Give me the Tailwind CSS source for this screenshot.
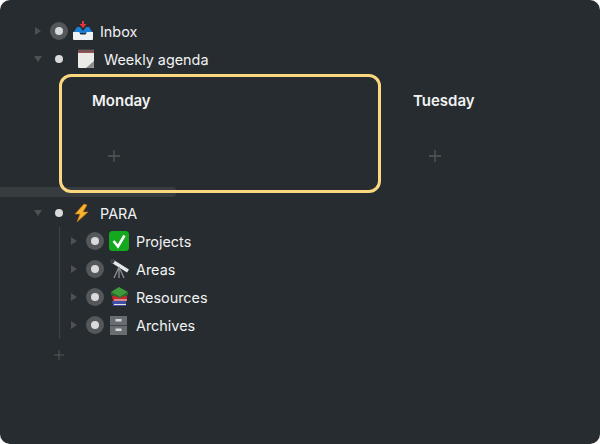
<!DOCTYPE html>
<html lang="en">
  <head>
    <meta charset="UTF-8" />
    <meta name="viewport" content="width=device-width, initial-scale=1.0" />
    <title>Weekly agenda</title>
    <script src="https://cdn.jsdelivr.net/npm/@tailwindcss/browser@4"></script>
  </head>
  <body class="bg-white overflow-hidden">
    <div class="relative w-[600px] h-[444px] overflow-hidden rounded-[10px] bg-[#272c30] pt-[17px] font-['Inter',sans-serif] text-[14.4px] text-[#f1f2f2]">
      <!-- Inbox -->
      <div class="flex h-[28px] items-center pl-[34px]">
        <svg class="w-[8px] h-[10px]" viewBox="0 0 8 10"><path d="M1 1l6 4-6 4z" fill="#4d5153" /></svg>
        <div class="ml-[8px] flex h-[18px] w-[18px] items-center justify-center rounded-full bg-[#54585a]">
          <div class="h-[8px] w-[8px] rounded-full bg-[#d9dadb]"></div>
        </div>
        <svg class="ml-[5px] w-[20px] h-[20px]" viewBox="0 0 20 20">
          <path d="M9 0h2v3h2.500L10 7 6.500 3H9z" fill="#e5343a" />
          <path d="M4 6h3l3 4 3-4h3l4 6H0z" fill="#1c7fd6" />
          <path d="M0 11h6l1.500 2.500h5L14 11h6v7a1 1 0 0 1-1 1H1a1 1 0 0 1-1-1z" fill="#eef2f5" />
        </svg>
        <span class="ml-[7px] pt-[2px]">Inbox</span>
      </div>
      <!-- Weekly agenda -->
      <div class="flex h-[28px] items-center pl-[33px]">
        <svg class="w-[10px] h-[8px]" viewBox="0 0 10 8"><path d="M1 1h8l-4 6z" fill="#4d5153" /></svg>
        <div class="ml-[7px] flex h-[18px] w-[18px] items-center justify-center">
          <div class="h-[8px] w-[8px] rounded-full bg-[#d9dadb]"></div>
        </div>
        <svg class="ml-[9px] w-[18px] h-[20px]" viewBox="0 0 18 20">
          <rect x="1" y="1" width="16" height="18" rx="1" fill="#eceae6" />
          <path d="M1 1h16v3H1z" fill="#9a5552" />
          <path d="M2 0v3M4 0v3M6 0v3M8 0v3M10 0v3M12 0v3M14 0v3M16 0v3" stroke="#5b5556" stroke-width="1" />
          <path d="M9 19l8-7v5a2 2 0 0 1-2 2z" fill="#8d8c8b" />
        </svg>
        <span class="ml-[9px] pt-[2px]">Weekly agenda</span>
      </div>
      <!-- Board -->
      <div class="flex h-[126px] items-start pl-[59px] pt-[1px]">
        <div class="relative z-10 flex h-[119px] w-[322px] shrink-0 flex-col rounded-[12px] border-[3px] border-[#fbd77f] pl-[30px] pt-[13px]">
          <div class="text-[15px] font-semibold leading-[22px]">Monday</div>
          <div class="mt-[38px] ml-[16px] text-[#54585a]">
            <svg class="w-[12px] h-[12px]" viewBox="0 0 12 12"><path d="M6 0v12M0 6h12" stroke="currentColor" stroke-width="1.300" /></svg>
          </div>
        </div>
        <div class="ml-[32px] flex flex-col pt-[16px]">
          <div class="text-[15px] font-semibold leading-[22px]">Tuesday</div>
          <div class="mt-[38px] ml-[16px] text-[#54585a]">
            <svg class="w-[12px] h-[12px]" viewBox="0 0 12 12"><path d="M6 0v12M0 6h12" stroke="currentColor" stroke-width="1.300" /></svg>
          </div>
        </div>
      </div>
      <!-- PARA -->
      <div class="flex h-[28px] items-center pl-[33px]">
        <svg class="w-[10px] h-[8px]" viewBox="0 0 10 8"><path d="M1 1h8l-4 6z" fill="#4d5153" /></svg>
        <div class="ml-[7px] flex h-[18px] w-[18px] items-center justify-center">
          <div class="h-[8px] w-[8px] rounded-full bg-[#d9dadb]"></div>
        </div>
        <svg class="ml-[5px] w-[18px] h-[20px]" viewBox="0 0 18 20">
          <path d="M11 1L2 11h5l-3 8 11-10h-5l4-7z" fill="#f7b32b" stroke="#c9741a" stroke-width=".6" />
        </svg>
        <span class="ml-[9px] pt-[2px]">PARA</span>
      </div>
      <!-- PARA children -->
      <div class="ml-[59px] border-l border-[#3d4245]">
        <div class="flex h-[28px] items-center pl-[10px]">
          <svg class="w-[8px] h-[10px]" viewBox="0 0 8 10"><path d="M1 1l6 4-6 4z" fill="#4d5153" /></svg>
          <div class="ml-[8px] flex h-[18px] w-[18px] items-center justify-center rounded-full bg-[#54585a]">
            <div class="h-[8px] w-[8px] rounded-full bg-[#d9dadb]"></div>
          </div>
          <svg class="ml-[5px] w-[20px] h-[20px]" viewBox="0 0 20 20">
            <rect x="0" y="0" width="20" height="20" rx="3.500" fill="#13a81e" />
            <path d="M4.500 10l4.500 5.500 6.500-11" fill="none" stroke="#fff" stroke-width="2.600" />
          </svg>
          <span class="ml-[7px] pt-[2px]">Projects</span>
        </div>
        <div class="flex h-[28px] items-center pl-[10px]">
          <svg class="w-[8px] h-[10px]" viewBox="0 0 8 10"><path d="M1 1l6 4-6 4z" fill="#4d5153" /></svg>
          <div class="ml-[8px] flex h-[18px] w-[18px] items-center justify-center rounded-full bg-[#54585a]">
            <div class="h-[8px] w-[8px] rounded-full bg-[#d9dadb]"></div>
          </div>
          <svg class="ml-[5px] w-[20px] h-[20px]" viewBox="0 0 20 20">
            <path d="M3 2l16 10" stroke="#e6e8ea" stroke-width="3.600" />
            <path d="M1.500 1l3.500 2.200" stroke="#3a3f44" stroke-width="3.600" />
            <path d="M10 8L5 19M10 8v11M10 8l5 11" stroke="#8c9094" stroke-width="1.300" fill="none" />
          </svg>
          <span class="ml-[7px] pt-[2px]">Areas</span>
        </div>
        <div class="flex h-[28px] items-center pl-[10px]">
          <svg class="w-[8px] h-[10px]" viewBox="0 0 8 10"><path d="M1 1l6 4-6 4z" fill="#4d5153" /></svg>
          <div class="ml-[8px] flex h-[18px] w-[18px] items-center justify-center rounded-full bg-[#54585a]">
            <div class="h-[8px] w-[8px] rounded-full bg-[#d9dadb]"></div>
          </div>
          <svg class="ml-[5px] w-[20px] h-[20px]" viewBox="0 0 20 20">
            <path d="M3 14h14v5H4z" fill="#3f4fa8" />
            <path d="M3 9h15v5H4z" fill="#c8282e" />
            <path d="M5 13h13M5 17.500h12" stroke="#e8e4dc" stroke-width="1" />
            <path d="M2 5l8-5 9 5-8 5z" fill="#3e9a3a" />
            <path d="M2 5v3l9 3 8-3V5l-8 5z" fill="#2c6e2b" />
          </svg>
          <span class="ml-[7px] pt-[2px]">Resources</span>
        </div>
        <div class="flex h-[28px] items-center pl-[10px]">
          <svg class="w-[8px] h-[10px]" viewBox="0 0 8 10"><path d="M1 1l6 4-6 4z" fill="#4d5153" /></svg>
          <div class="ml-[8px] flex h-[18px] w-[18px] items-center justify-center rounded-full bg-[#54585a]">
            <div class="h-[8px] w-[8px] rounded-full bg-[#d9dadb]"></div>
          </div>
          <svg class="ml-[5px] w-[20px] h-[20px]" viewBox="0 0 20 20">
            <rect x="1" y="1" width="17" height="19" fill="#686d71" />
            <path d="M1 10.500h17" stroke="#3f4347" stroke-width="1" />
            <rect x="6.500" y="4" width="6" height="2.500" fill="#d5d7d8" />
            <rect x="6.500" y="13.500" width="6" height="2.500" fill="#d5d7d8" />
          </svg>
          <span class="ml-[7px] pt-[2px]">Archives</span>
        </div>
      </div>
      <div class="ml-[54px] mt-[11px] text-[#54585a]">
        <svg class="w-[10px] h-[10px]" viewBox="0 0 10 10"><path d="M5 0v10M0 5h10" stroke="currentColor" stroke-width="1" /></svg>
      </div>
      <!-- horizontal scrollbar, under the board's yellow border -->
      <div class="absolute left-0 top-[187px] h-[10px] w-[177px] rounded-r-[5px] bg-[#373c3e]"></div>
    </div>
  </body>
</html>
